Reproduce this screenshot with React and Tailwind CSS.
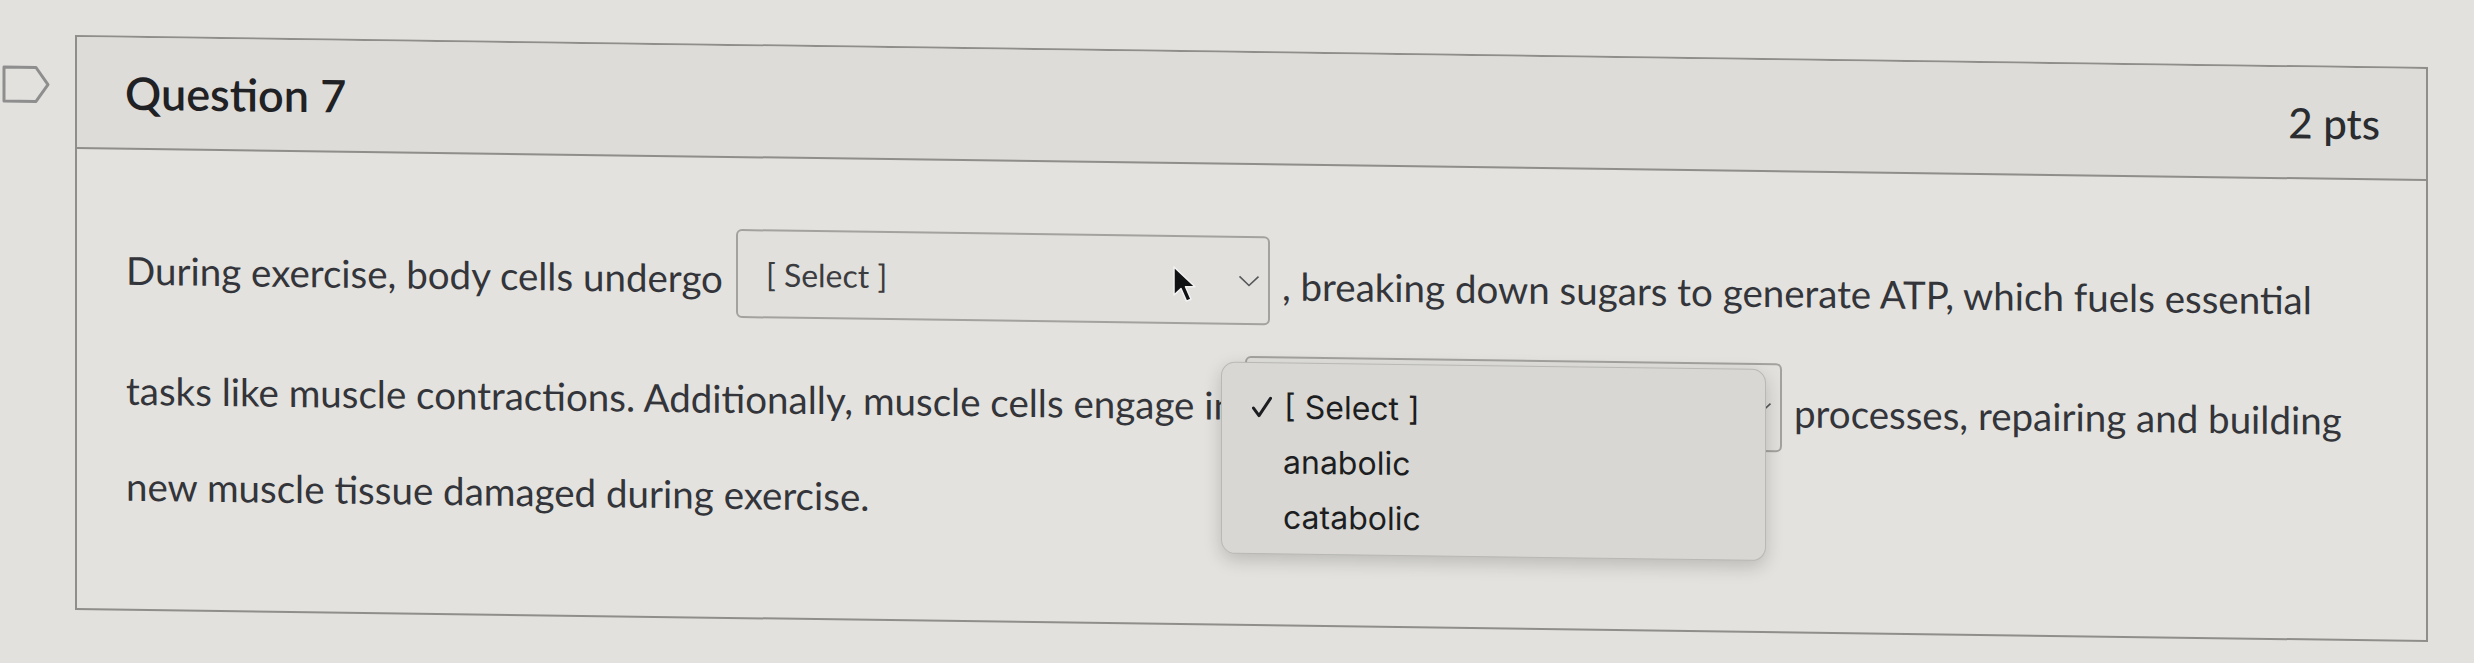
import React from 'react';

function Chevron() {
  return (
    <svg width="22" height="12" viewBox="0 0 22 12" fill="none" aria-hidden="true">
      <path d="M1.5 1.5 L11 10.5 L20.5 1.5" stroke="#55575a" strokeWidth="1.6" />
    </svg>
  );
}

function Pointer() {
  return (
    <svg width="26" height="38" viewBox="0 0 26 38" aria-hidden="true">
      <path
        d="M2 2 L2 30 L9 23.5 L14.5 36 L19 34 L13.5 21.5 L23 21.5 Z"
        fill="#111214"
        stroke="#f2f2f2"
        strokeWidth="1.5"
        strokeLinejoin="round"
      />
    </svg>
  );
}

function Bookmark() {
  return (
    <svg width="50" height="40" viewBox="0 0 50 40" fill="none" aria-hidden="true">
      <path d="M3 3 L35 3 L47 20 L35 37 L3 37 Z" stroke="#8e8e8f" strokeWidth="3" strokeLinejoin="round" />
    </svg>
  );
}

function SelectBox({ width, children }) {
  return (
    <div
      className="relative flex h-[89px] shrink-0 items-center justify-between rounded-[6px] border-2 border-[#a3a29f] bg-[#e1e0dc] pl-[28px] pr-[8px]"
      style={{ width }}
    >
      <span className="text-[32px] leading-none text-[#3b3c40]">[ Select ]</span>
      <Chevron />
      {children}
    </div>
  );
}

export default function App() {
  return (
    <div className="h-[663px] w-full overflow-hidden bg-[#e2e1dd] font-['Lato','Noto_Sans',sans-serif]">
      <div className="flex origin-top-left skew-y-[0.78deg] items-start">
        {/* bookmark flag */}
        <div className="w-[75px] shrink-0 pl-[1px] pt-[64px]">
          <Bookmark />
        </div>

        <div className="mt-[34px] flex h-[575px] w-[2353px] flex-col border-2 border-[#8f8e8b] bg-[#e3e2de]">
          <div className="flex h-[112px] shrink-0 items-center justify-between border-b-2 border-[#8f8e8b] bg-[#dddcd8] pl-[48px] pr-[46px]">
            <h2 className="text-[45px] font-semibold leading-none text-[#1f2124]">Question 7</h2>
            <span className="text-[42px] font-medium leading-none text-[#2a2c30]">2 pts</span>
          </div>

          <div className="flex flex-col pl-[49px] pt-[71px] text-[38.5px] leading-none text-[#33353a]">
            <div className="flex items-start">
              <span className="mt-[30px] whitespace-pre">During exercise, body cells undergo</span>
              <div className="ml-[13px]">
                <SelectBox width={534}>
                  <div className="absolute left-[434px] top-[28px]">
                    <Pointer />
                  </div>
                </SelectBox>
              </div>
              <span className="ml-[12px] mt-[30px] whitespace-pre">, breaking down sugars to generate ATP, which fuels essential</span>
            </div>

            <div className="mt-[31px] flex items-start">
              <span className="mt-[30px] whitespace-pre">tasks like muscle contractions. Additionally, muscle cells engage in</span>
              <div className="relative ml-[10px]">
                <SelectBox width={537} />
                <div className="absolute left-[-24px] top-[6px] h-[192px] w-[545px] rounded-[14px] border border-[#b9b8b4] bg-[#d8d7d3] pt-[16px] font-['Inter','Roboto',sans-serif] text-[32px] leading-[55px] text-[#1d1e21] shadow-[0_6px_18px_rgba(0,0,0,0.18)]">
                  <div className="flex items-center">
                    <span className="w-[62px] pl-[29px]">
                      <svg width="22" height="22" viewBox="0 0 22 22" fill="none" aria-hidden="true">
                        <path d="M2.5 12 L8 19.5 L19.5 2" stroke="#1d1e21" strokeWidth="3" strokeLinecap="round" strokeLinejoin="round" />
                      </svg>
                    </span>
                    <span>[ Select ]</span>
                  </div>
                  <div className="pl-[61px]">anabolic</div>
                  <div className="pl-[61px]">catabolic</div>
                </div>
              </div>
              <span className="ml-[12px] mt-[30px] whitespace-pre">processes, repairing and building</span>
            </div>

            <div className="mt-[37px] flex items-start">
              <span className="whitespace-pre">new muscle tissue damaged during exercise.</span>
            </div>
          </div>
        </div>
      </div>
    </div>
  );
}
